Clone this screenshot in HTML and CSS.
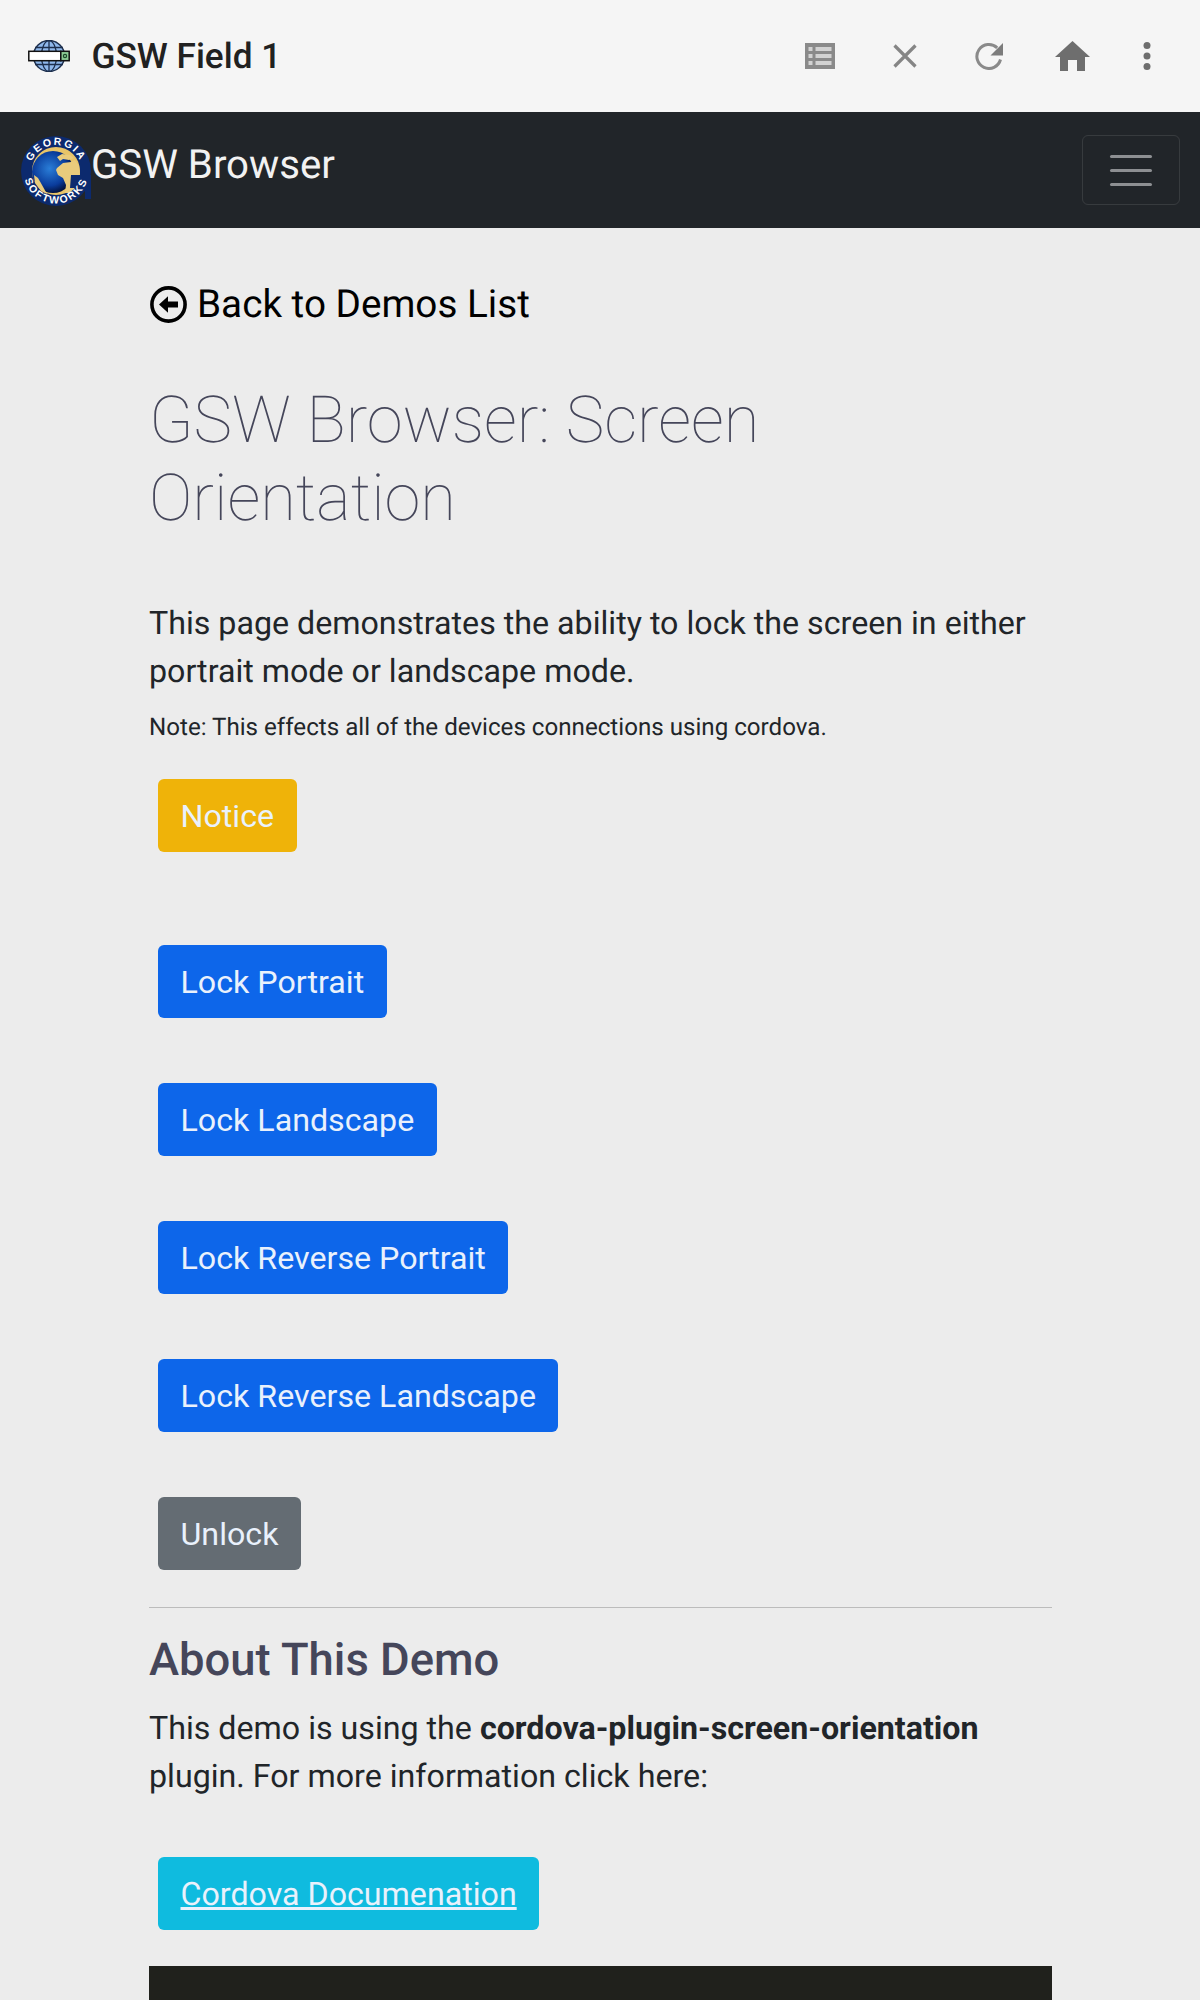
FILE: index.html
```html
<!DOCTYPE html>
<html lang="en">
<head>
<meta charset="UTF-8" />
<meta name="viewport" content="width=device-width, initial-scale=1" />
<title>GSW Browser: Screen Orientation</title>
<link rel="stylesheet" href="styles.css">
</head>
<body>

<header class="app-bar">
  <svg class="app-icon" viewBox="0 0 42 32" aria-hidden="true">
    <circle cx="21" cy="16" r="15.500" fill="#8fb8ec" stroke="#1d2f4d" stroke-width="1.500"/>
    <ellipse cx="21" cy="16" rx="7.500" ry="15.500" fill="none" stroke="#1d2f4d" stroke-width="1.300"/>
    <path d="M21 .5v31M7 7.500h28M7 24.500h28" stroke="#1d2f4d" stroke-width="1.300" fill="none"/>
    <rect x=".8" y="11.300" width="32" height="9.400" fill="#fff" stroke="#111" stroke-width="1.500"/>
    <rect x="32.800" y="11.300" width="8.400" height="9.400" fill="#8ccb94" stroke="#111" stroke-width="1.500"/>
    <circle cx="37" cy="16" r="1.600" fill="none" stroke="#1c4a2a" stroke-width="1.200"/>
  </svg>
  <span class="app-title">GSW Field 1</span>
  <div class="app-actions">
    <svg class="action list-icon" viewBox="0 0 30 26" aria-hidden="true">
      <path fill="#8a8a8a" d="M0 0h30v26H0z"/>
      <path fill="#d2d2d2" d="M3.500 4h4v4h-4zM10.500 4h16v4h-16zM3.500 11h4v4h-4zM10.500 11h16v4h-16zM3.500 18h4v4h-4zM10.500 18h16v4h-16z"/>
    </svg>
    <svg class="action close-icon" viewBox="0 0 24 24" aria-hidden="true">
      <path d="M1.500 1.500l21 21M22.500 1.500l-21 21" stroke="#858585" stroke-width="3.200" fill="none"/>
    </svg>
    <svg class="action refresh-icon" viewBox="0 0 28 28" aria-hidden="true">
      <path d="M25.500 17.500A12 12 0 1 1 22.200 5.800" stroke="#8a8a8a" stroke-width="3" fill="none"/>
      <path d="M28 1v12.500H15.500z" fill="#7c7c7c"/>
    </svg>
    <svg class="action home-icon" viewBox="0 0 35 30" aria-hidden="true">
      <path fill="#6e6e6e" d="M17.500 0L35 16h-5v14h-8V19h-9v11H5V16H0z"/>
    </svg>
    <svg class="action more-icon" viewBox="0 0 8 28" aria-hidden="true">
      <circle cx="4" cy="3.500" r="3.500" fill="#6e6e6e"/>
      <circle cx="4" cy="14" r="3.500" fill="#6e6e6e"/>
      <circle cx="4" cy="24.500" r="3.500" fill="#6e6e6e"/>
    </svg>
  </div>
</header>

<nav class="navbar">
  <svg class="brand-logo" viewBox="0 0 70 72" aria-hidden="true">
    <defs>
      <radialGradient id="ocean" cx="42%" cy="42%" r="62%">
        <stop offset="0" stop-color="#2a7ed8"/>
        <stop offset="0.65" stop-color="#0a3c9c"/>
        <stop offset="1" stop-color="#020c30"/>
      </radialGradient>
      <path id="arc-top" d="M9 36a26 26 0 0 1 52 0"/>
      <path id="arc-bottom" d="M2.500 36a32.500 32.500 0 0 0 65 0"/>
    </defs>
    <circle cx="35" cy="36" r="35" fill="#0c2a6e"/>
    <circle cx="35" cy="36" r="24" fill="#e8c468"/>
    <circle cx="32" cy="37" r="21" fill="url(#ocean)"/>
    <!-- land, just rough blobs at this size -->
    <path fill="#e9cb7c" d="M36 33l6-5 8-1 4-2 4 6 1 8-1 8-5 7-5 4-4 0 1-8-3-7-5-3-2-5z"/>
    <path fill="#e9cb7c" d="M36 22l5-3 8 1 4 3-5 2-6-1-3 2z"/>
    <path fill="#e9cb7c" d="M13 40l4 3 4 7 5 9-6-3-6-8z"/>
    <path fill="#0c2a6e" d="M50 40h20v24h-6V47H57v6H49z"/>
    <text class="logo-text"><textPath href="#arc-top" startOffset="50%" text-anchor="middle">GEORGIA</textPath></text>
    <text class="logo-text"><textPath href="#arc-bottom" startOffset="50%" text-anchor="middle">SOFTWORKS</textPath></text>
  </svg>
  <a class="brand-name" href="#">GSW Browser</a>
  <button class="nav-toggle" aria-label="Toggle navigation">
    <span></span><span></span><span></span>
  </button>
</nav>

<main class="content">
  <a class="back-link" href="#">
    <svg class="back-icon" viewBox="0 0 37 37" aria-hidden="true">
      <circle cx="18.500" cy="18.500" r="16.600" fill="none" stroke="#000" stroke-width="3.600"/>
      <path d="M9 18.500l9-8.200v5.200h10v6H18v5.200z" fill="#000"/>
    </svg>
    <span class="back-label">Back to Demos List</span>
  </a>

  <h1>GSW Browser: Screen Orientation</h1>

  <p class="lead">This page demonstrates the ability to lock the screen in either portrait mode or landscape mode.</p>
  <p class="note">Note: This effects all of the devices connections using cordova.</p>

  <div class="btn-row notice-row"><button class="btn btn-warning">Notice</button></div>
  <div class="btn-row"><button class="btn btn-primary">Lock Portrait</button></div>
  <div class="btn-row"><button class="btn btn-primary">Lock Landscape</button></div>
  <div class="btn-row"><button class="btn btn-primary">Lock Reverse Portrait</button></div>
  <div class="btn-row"><button class="btn btn-primary">Lock Reverse Landscape</button></div>
  <div class="btn-row"><button class="btn btn-secondary">Unlock</button></div>

  <hr>

  <h2>About This Demo</h2>
  <p class="lead">This demo is using the <strong>cordova-plugin-screen-orientation</strong> plugin. For more information click here:</p>

  <div class="btn-row doc-row"><a class="btn btn-info" href="#">Cordova Documenation</a></div>

  <div class="code-block"></div>
</main>

</body>
</html>
```

FILE: styles.css
```css
/* --- Reset & basics --- */
* {
  margin: 0; padding: 0; box-sizing: border-box;
}
html, body {
  height: 2000px;
  overflow: hidden;
}
body {
  background: #ececec;
  color: #212529;
  font-family: Roboto, "Liberation Sans", sans-serif;
  text-rendering: geometricPrecision;
}

/* --- App bar --- */
.app-bar {
  height: 112px;
  background: #f5f5f5;
  display: flex;
  align-items: center;
  padding-left: 28px;
}
.app-icon {
  width: 42px;
  height: 32px;
  margin-right: 21.500px;
}
.app-title {
  font-size: 35.200px;
  font-weight: 500;
  color: #212121;
}
.app-actions {
  margin-left: auto;
  display: flex;
  align-items: center;
  padding-right: 49px;
}
.action { display: block; }
.list-icon { width: 30px; height: 26px; margin-right: 58px; }
.close-icon { width: 24px; height: 24px; margin-right: 58px; }
.refresh-icon { width: 28px; height: 28px; margin-right: 52px; }
.home-icon { width: 35px; height: 30px; margin-right: 53px; }
.more-icon { width: 8px; height: 28px; }

/* --- Navbar --- */
.navbar {
  height: 116px;
  background: #212529;
  display: flex;
  align-items: center;
  padding: 0 21px;
}
.brand-logo {
  width: 70px;
  height: 72px;
  margin-top: 2px;
}
.logo-text {
  font-family: "Liberation Sans", sans-serif;
  font-size: 10.500px;
  font-weight: 700;
  letter-spacing: 1.800px;
  fill: #fff;
}
.brand-name {
  margin-top: -12px;
  font-size: 40.200px;
  color: #f2f2f2;
  text-decoration: none;
}
.nav-toggle {
  margin-left: auto;
  margin-right: -1px;
  width: 98px;
  height: 70px;
  background: transparent;
  border: 1px solid rgba(255, 255, 255, 0.1);
  border-radius: 6px;
  display: flex;
  flex-direction: column;
  align-items: center;
  justify-content: center;
  gap: 11px;
}
.nav-toggle span {
  width: 42px;
  height: 3px;
  border-radius: 2px;
  background: #8d8f92;
}

/* --- Content --- */
.content {
  width: 903px;
  margin-left: 149px;
  padding-top: 51px;
}
.back-link {
  display: flex;
  align-items: center;
  gap: 10px;
  font-size: 38.700px;
  line-height: 50px;
  color: #000;
  text-decoration: none;
}
.back-label {
  padding-top: 1px;
}
.back-icon {
  width: 37px;
  height: 37px;
  margin-left: 1px;
}
h1 {
  margin-top: 51px;
  font-size: 65px;
  line-height: 78px;
  font-weight: 100;
  color: #45465a;
}
.lead {
  font-size: 32.200px;
  line-height: 48px;
}
h1 + .lead {
  margin-top: 62px;
}
.note {
  margin-top: 14px;
  font-size: 24.150px;
  line-height: 36px;
}

/* --- Buttons --- */
.btn-row {
  margin-top: 65px;
  padding-left: 9px;
}
.notice-row {
  margin-top: 34px;
  margin-bottom: 93px;
}
.notice-row + .btn-row {
  margin-top: 0;
}
.doc-row {
  margin-top: 57px;
}
.btn {
  display: inline-block;
  height: 73px;
  padding: 1px 22.500px 0;
  border: 0;
  border-radius: 6px;
  font-family: inherit;
  font-size: 32.200px;
  line-height: 73px;
  color: #e9f1fc;
}
.btn-warning { background: #efb309; }
.btn-primary { background: #0d66ea; }
.btn-secondary { background: #646c73; }
.btn-info { background: #0fbbdf; }

hr {
  margin-top: 37px;
  border: 0;
  border-top: 1px solid #bcbcbc;
}
h2 {
  margin-top: 25px;
  font-size: 45.400px;
  line-height: 56px;
  font-weight: 500;
  color: #45465a;
}
h2 + .lead {
  margin-top: 15px;
}
.code-block {
  margin-top: 36px;
  height: 100px;
  background: #20211c;
}
```
